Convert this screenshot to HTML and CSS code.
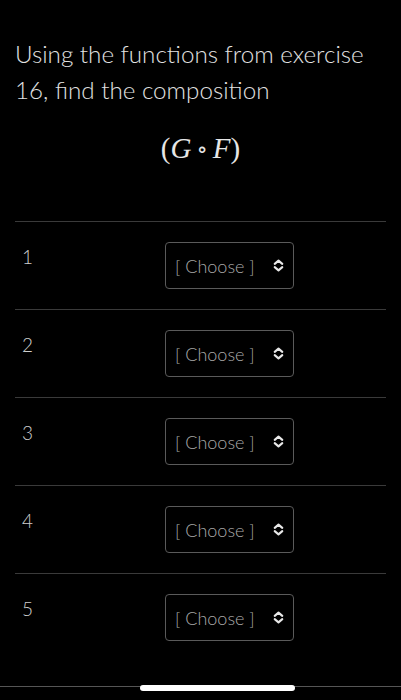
FILE: index.html
```html
<!DOCTYPE html>
<html lang="en">
  <head>
    <meta charset="UTF-8" />
    <meta name="viewport" content="width=device-width, initial-scale=1" />
    <title>Question</title>
    <link rel="stylesheet" href="styles.css">
  </head>
  <body>
    <div class="question">
      <p class="prompt">Using the functions from exercise 16, find the composition</p>
      <p class="formula">(<i>G</i><span class="ring">∘</span><i>F</i>)</p>

      <div class="answers">
        <div class="row">
          <span class="num">1</span>
          <div class="select">[ Choose ]<svg class="chev" viewBox="0 0 12 12"><path d="M2.5 4.5 L6 1.5 L9.5 4.5 M2.5 7.5 L6 10.5 L9.5 7.5" /></svg></div>
        </div>
        <div class="row">
          <span class="num">2</span>
          <div class="select">[ Choose ]<svg class="chev" viewBox="0 0 12 12"><path d="M2.5 4.5 L6 1.5 L9.5 4.5 M2.5 7.5 L6 10.5 L9.5 7.5" /></svg></div>
        </div>
        <div class="row">
          <span class="num">3</span>
          <div class="select">[ Choose ]<svg class="chev" viewBox="0 0 12 12"><path d="M2.5 4.5 L6 1.5 L9.5 4.5 M2.5 7.5 L6 10.5 L9.5 7.5" /></svg></div>
        </div>
        <div class="row">
          <span class="num">4</span>
          <div class="select">[ Choose ]<svg class="chev" viewBox="0 0 12 12"><path d="M2.5 4.5 L6 1.5 L9.5 4.5 M2.5 7.5 L6 10.5 L9.5 7.5" /></svg></div>
        </div>
        <div class="row">
          <span class="num">5</span>
          <div class="select">[ Choose ]<svg class="chev" viewBox="0 0 12 12"><path d="M2.5 4.5 L6 1.5 L9.5 4.5 M2.5 7.5 L6 10.5 L9.5 7.5" /></svg></div>
        </div>
      </div>
    </div>

    <div class="bottom">
      <div class="home"></div>
    </div>
  </body>
</html>
```

FILE: styles.css
```css
html,
body {
  background: #000;
}

body {
  margin: 0;
  padding: 0;
  font-family: Lato, "Open Sans", sans-serif;
  font-weight: 300;
  color: #e2e2e2;
  width: 401px;
  height: 700px;
  position: relative;
  overflow: hidden;
}

.question {
  padding: 36px 15px 0 15px;
}

.prompt {
  margin: 0;
  font-size: 24.2px;
  line-height: 36px;
}

.formula {
  margin: 22px 0 0 0;
  height: 36px;
  text-align: center;
  font-family: "Liberation Serif", "DejaVu Serif", serif;
  font-weight: 400;
  font-size: 29px;
  line-height: 36px;
  color: #e6e6e6;
}

.formula i {
  font-style: italic;
}

.ring {
  font-size: 23px;
  line-height: 1;
  margin: 0 5px;
  position: relative;
  top: -1px;
}

.answers {
  margin-top: 55px;
}

.row {
  box-sizing: border-box;
  display: flex;
  align-items: flex-start;
  border-top: 1px solid #3a3a3a;
  height: 88px;
  padding-top: 20px;
}

.num {
  box-sizing: border-box;
  width: 150px;
  padding-left: 7px;
  padding-top: 3px;
  font-size: 19px;
  line-height: 24px;
  color: #cfcfcf;
}

.select {
  box-sizing: border-box;
  width: 129px;
  height: 47px;
  border: 1px solid #5a5a5a;
  border-radius: 4px;
  display: flex;
  align-items: center;
  padding-left: 9px;
  font-size: 18px;
  color: #a9a9a9;
}

.chev {
  width: 13px;
  height: 13px;
  margin-left: auto;
  margin-right: 8px;
}

.chev path {
  fill: none;
  stroke: #e8e8e8;
  stroke-width: 1.9;
  stroke-linecap: round;
  stroke-linejoin: round;
}

.bottom {
  position: absolute;
  left: 0;
  right: 0;
  top: 686px;
  border-top: 1px solid #555;
}

.home {
  position: absolute;
  left: 140px;
  top: -2px;
  width: 155px;
  height: 6px;
  border-radius: 3px;
  background: #fff;
}
```
